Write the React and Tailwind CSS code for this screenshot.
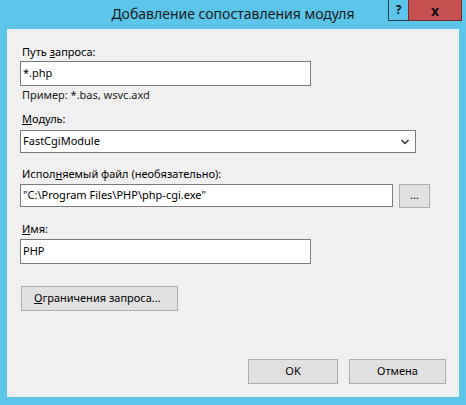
import { ChevronDown } from 'lucide-react';

const font = { fontFamily: '"Noto Sans", "Liberation Sans", sans-serif' };

function Label({ children, className = '' }) {
  return <div className={`h-4 leading-4 pl-[2px] text-[11px] text-[#000] ${className}`}>{children}</div>;
}

function Field({ value, className = '' }) {
  return (
    <div className={`flex items-center bg-white border border-[#7a7a7a] pl-[2px] text-[11px] text-black ${className}`}>
      {value}
    </div>
  );
}

function Btn({ children, className = '' }) {
  return (
    <div className={`flex items-center justify-center bg-[#e1e1e1] border border-[#adadad] text-[11px] text-black ${className}`}>
      {children}
    </div>
  );
}

export default function App() {
  return (
    <div className="w-[466px] h-[405px] bg-[#5cc6ea] flex flex-col" style={font}>

      {/* Title bar */}
      <div className="relative h-[29px] flex items-center justify-center shrink-0">
        <span className="text-[14px] text-[#1a1a1a] -mt-[3px]">Добавление сопоставления модуля</span>
        <div className="absolute top-0 left-[388px] w-[21px] h-[21px] border border-t-0 border-[#2a3a44] flex items-center justify-center text-[12px] font-bold text-[#111]">?</div>
        <div className="absolute top-0 left-[408px] w-[54px] h-[21px] bg-[#c75050] border border-t-0 border-[#6e2a2a] flex items-center justify-center text-[14px] font-bold text-[#111]">x</div>
      </div>

      {/* Client area */}
      <div className="mx-[7px] h-[368px] bg-[#f0f0f0] px-[13px] flex flex-col">
        <Label className="mt-[15px]">Путь <u>з</u>апроса:</Label>
        <Field value="*.php" className="mt-[1px] w-[291px] h-[25px]" />
        <Label className="mt-[1px] text-[#1b1b1b]">Пример: *.bas, wsvc.axd</Label>
        <Label className="mt-[8px]"><u>М</u>одуль:</Label>
        <div className="mt-[3px] w-[396px] h-[23px] bg-white border border-[#7a7a7a] flex items-center justify-between pl-[2px] pr-[4px] text-[11px]">
          <span>FastCgiModule</span>
          <ChevronDown size={12} strokeWidth={3.5} className="text-[#404040]" />
        </div>
        <Label className="mt-[13px]">Испол<u>н</u>яемый файл (необязательно):</Label>
        <div className="mt-[2px] flex gap-[6px]">
          <Field value={'"C:\\Program Files\\PHP\\php-cgi.exe"'} className="w-[373px] h-[23px]" />
          <Btn className="w-[31px] h-[24px] bg-[#dcdcdc] border-[#707070] text-[10px] pb-[2px]">...</Btn>
        </div>
        <Label className="mt-[13px]"><u>И</u>мя:</Label>
        <Field value="PHP" className="mt-[2px] w-[291px] h-[25px]" />
        <Btn className="mt-[22px] ml-[1px] w-[157px] h-[25px] border-[#3c7fb1] justify-start pl-[12px]">
          <span><u>О</u>граничения запроса...</span>
        </Btn>
        <div className="mt-[48px] flex justify-end gap-[11px] pr-[0px]">
          <Btn className="w-[90px] h-[25px]">OK</Btn>
          <Btn className="w-[97px] h-[25px]">Отмена</Btn>
        </div>
      </div>
    </div>
  );
}
